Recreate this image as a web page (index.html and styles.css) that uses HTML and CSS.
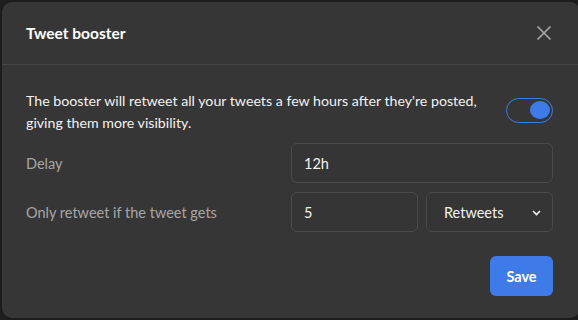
FILE: index.html
```html
<!DOCTYPE html>
<html>
<head>
<meta charset="utf-8">
<link rel="stylesheet" href="styles.css">
</head>
<body>
<div class="modal">
  <div class="header">
    <div class="title">Tweet booster</div>
    <svg class="close" width="16" height="16" viewBox="0 0 16 16"><path d="M1.5 1.5 L14.5 14.5 M14.5 1.5 L1.5 14.5" stroke="#a9a9a9" stroke-width="1.6" fill="none"/></svg>
  </div>
  <div class="body">
    <div class="desc-row">
      <p class="desc">The booster will retweet all your tweets a few hours after they're posted, giving them more visibility.</p>
      <div class="toggle"><div class="knob"></div></div>
    </div>
    <div class="form">
      <div class="label">Delay</div>
      <div class="field wide">12h</div>
      <div class="label">Only retweet if the tweet gets</div>
      <div class="pair">
        <div class="field">5</div>
        <div class="field select">Retweets
          <svg class="chev" width="9" height="6" viewBox="0 0 9 6"><path d="M1 1 L4.5 4.5 L8 1" stroke="#f2f2f2" stroke-width="1.6" fill="none"/></svg>
        </div>
      </div>
    </div>
    <div class="footer">
      <button class="save">Save</button>
    </div>
  </div>
</div>
</body>
</html>
```
FILE: styles.css
```css
html, body {
  margin: 0;
  padding: 0;
  background: #1d1d1d;
  font-family: Lato, "Noto Sans", sans-serif;
}
.modal {
  margin: 2px 0 0 2px;
  width: 578px;
  height: 316px;
  background: #363636;
  border-radius: 10px;
  box-sizing: border-box;
}
.header {
  height: 63px;
  box-sizing: border-box;
  padding: 0 28px 0 24px;
  display: flex;
  align-items: center;
  justify-content: space-between;
  border-bottom: 1px solid #464646;
}
.title {
  color: #ffffff;
  font-weight: 700;
  font-size: 15.5px;
}
.body {
  padding: 25px 27px 0 24px;
}
.desc-row {
  display: flex;
  align-items: center;
  justify-content: space-between;
}
.desc {
  margin: 0;
  color: #f2f2f2;
  font-size: 14.2px;
  line-height: 22px;
  width: 465px;
}
.toggle {
  width: 47px;
  height: 25px;
  box-sizing: border-box;
  border: 1.5px solid #3f7be8;
  border-radius: 13px;
  display: flex;
  align-items: center;
  justify-content: flex-end;
  padding-right: 2px;
  margin-top: -4px;
}
.knob {
  width: 20px;
  height: 18px;
  border-radius: 50%;
  background: #3f7be8;
}
.form {
  margin-top: 9px;
  display: grid;
  grid-template-columns: 265px 262px;
  row-gap: 9px;
  align-items: center;
}
.label {
  color: #a6a6a6;
  font-size: 14.5px;
}
.field {
  height: 40px;
  box-sizing: border-box;
  border: 1px solid #4a4a4a;
  border-radius: 6px;
  background: #353535;
  color: #f2f2f2;
  font-size: 14.5px;
  display: flex;
  align-items: center;
  padding: 0 12px;
}
.pair {
  display: grid;
  grid-template-columns: 127px 127px;
  column-gap: 8px;
}
.select {
  justify-content: space-between;
  padding: 0 11px 0 17px;
}
.chev {
  margin-top: 1px;
}
.footer {
  display: flex;
  justify-content: flex-end;
  margin-top: 24px;
}
.save {
  width: 63px;
  height: 40px;
  border: none;
  border-radius: 6px;
  background: #3f7be8;
  color: #ffffff;
  font-family: Lato, "Noto Sans", sans-serif;
  font-weight: 700;
  font-size: 14.5px;
  padding: 0;
}
```
